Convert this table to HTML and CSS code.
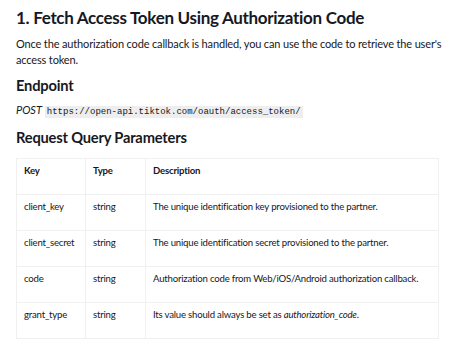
FILE: index.html
```html
<!DOCTYPE html>
<html lang="en">
<head>
  <meta charset="UTF-8">
  <meta name="viewport" content="width=device-width, initial-scale=1.0">
  <title>Fetch Access Token</title>
  <link rel="stylesheet" href="styles.css">
</head>
<body>
  <div class="doc">
    <h2 class="title">1. Fetch Access Token Using Authorization Code</h2>
    <p class="text">Once the authorization code callback is handled, you can use the code to retrieve the user's access token.</p>

    <h3 class="subtitle">Endpoint</h3>
    <p class="endpoint"><em>POST</em> <code>https://open-api.tiktok.com/oauth/access_token/</code></p>

    <h3 class="subtitle">Request Query Parameters</h3>
    <table class="params">
      <thead>
        <tr>
          <th class="col-key">Key</th>
          <th class="col-type">Type</th>
          <th>Description</th>
        </tr>
      </thead>
      <tbody>
        <tr>
          <td>client_key</td>
          <td>string</td>
          <td>The unique identification key provisioned to the partner.</td>
        </tr>
        <tr>
          <td>client_secret</td>
          <td>string</td>
          <td>The unique identification secret provisioned to the partner.</td>
        </tr>
        <tr>
          <td>code</td>
          <td>string</td>
          <td>Authorization code from Web/iOS/Android authorization callback.</td>
        </tr>
        <tr>
          <td>grant_type</td>
          <td>string</td>
          <td>Its value should always be set as <em>authorization_code</em>.</td>
        </tr>
      </tbody>
    </table>
  </div>
</body>
</html>
```

FILE: styles.css
```css
body {
  margin: 0;
  font-family: 'Lato', sans-serif;
  color: #161823;
  background-color: #fff;
}
.doc {
  padding: 7px 0 0 16px;
}
.title {
  margin: 0 0 7px;
  font-size: 17px;
  font-weight: 700;
  line-height: 22px;
  letter-spacing: -0.3px;
}
.text {
  max-width: 436px;
  margin: 0 0 7px;
  font-size: 11px;
  line-height: 16px;
  letter-spacing: -0.15px;
}
.subtitle {
  margin: 0 0 7px;
  font-size: 14.7px;
  font-weight: 700;
  line-height: 20px;
  letter-spacing: -0.2px;
}
.endpoint {
  margin: 0 0 7px;
  font-size: 11px;
  line-height: 16px;
}
.endpoint code {
  font-family: 'Liberation Mono', monospace;
  font-size: 9px;
  background-color: #eeeeef;
  padding: 1px 2px;
}
.params {
  width: 423px;
  border-collapse: collapse;
  margin-top: 11px;
  font-size: 9.6px;
  line-height: 12px;
  letter-spacing: -0.2px;
}
.params th,
.params td {
  border: 1px solid #f0f0f1;
  text-align: left;
  vertical-align: top;
  white-space: nowrap;
  padding: 6px 7px 0;
  height: 36px;
  box-sizing: border-box;
}
.params th {
  font-weight: 700;
}
.col-key {
  width: 69px;
}
.col-type {
  width: 60px;
}
```
